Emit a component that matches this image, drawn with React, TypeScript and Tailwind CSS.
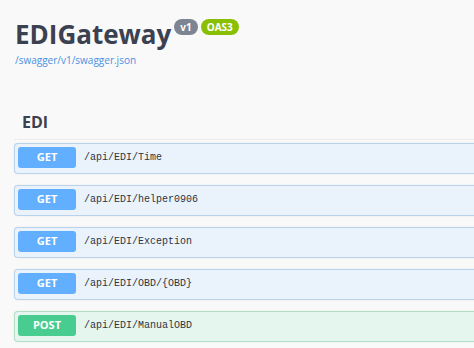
const ops = [
	{ method: "GET", path: "/api/EDI/Time" },
	{ method: "GET", path: "/api/EDI/helper0906" },
	{ method: "GET", path: "/api/EDI/Exception" },
	{ method: "GET", path: "/api/EDI/OBD/{OBD}" },
	{ method: "POST", path: "/api/EDI/ManualOBD" },
];

function OpRow({ method, path }: { method: string; path: string }) {
	const isPost = method === "POST";
	return (
		<div
			className={
				isPost
					? "flex h-[31px] items-start gap-2 rounded-l-[4px] border border-r-0 border-[#b3dfc8] bg-[#e5f6ee] pl-[3px] pt-[3px] shadow-[0_0_2px_rgba(0,0,0,0.08)]"
					: "flex h-[31px] items-start gap-2 rounded-l-[4px] border border-r-0 border-[#b9d3ec] bg-[#eaf3fc] pl-[3px] pt-[3px] shadow-[0_0_2px_rgba(0,0,0,0.08)]"
			}
		>
			{/* 메서드 버튼 */}
			<div
				className={
					isPost
						? "flex h-[21px] w-[58px] items-center justify-center rounded-[3px] bg-[#49cc90] text-[11px] font-bold text-white"
						: "flex h-[21px] w-[58px] items-center justify-center rounded-[3px] bg-[#61affe] text-[11px] font-bold text-white"
				}
			>
				{method}
			</div>
			{/* 경로 */}
			<div className="flex h-[21px] items-center font-['Liberation_Mono',monospace] text-[10px] text-[#2f3442]">
				{path}
			</div>
		</div>
	);
}

export default function App() {
	return (
		<div className="h-[348px] w-[474px] overflow-hidden bg-[#f9f9f9] font-['Open_Sans',sans-serif] text-[#3b4151]">
			{/* 헤더 */}
			<div className="pl-[15px] pt-[18px]">
				<div className="flex items-start">
					<h1 className="text-[26px] font-bold leading-[32px]">EDIGateway</h1>
					<div className="ml-[3px] mt-[1px] flex gap-[3px]">
						<span className="rounded-full bg-[#7d8492] px-[6px] text-[10px] font-bold leading-[16px] text-white">
							v1
						</span>
						<span className="rounded-full bg-[#89bf04] px-[6px] text-[10px] font-bold leading-[16px] text-white">
							OAS3
						</span>
					</div>
				</div>
				<div className="mt-[4px] text-[10px] leading-[12px] text-[#4990e2]">
					/swagger/v1/swagger.json
				</div>
			</div>

			{/* 태그 섹션 */}
			<div className="mt-[46px] pl-[14px] mr-[-4px]">
				<div className="border-b border-[#ececec] pb-[7px] pl-[8px] text-[16px] font-bold leading-[20px]">
					EDI
				</div>
				<div className="mt-[3px] flex flex-col gap-[11px]">
					{ops.map((op) => (
						<OpRow key={op.path} method={op.method} path={op.path} />
					))}
				</div>
			</div>
		</div>
	);
}
